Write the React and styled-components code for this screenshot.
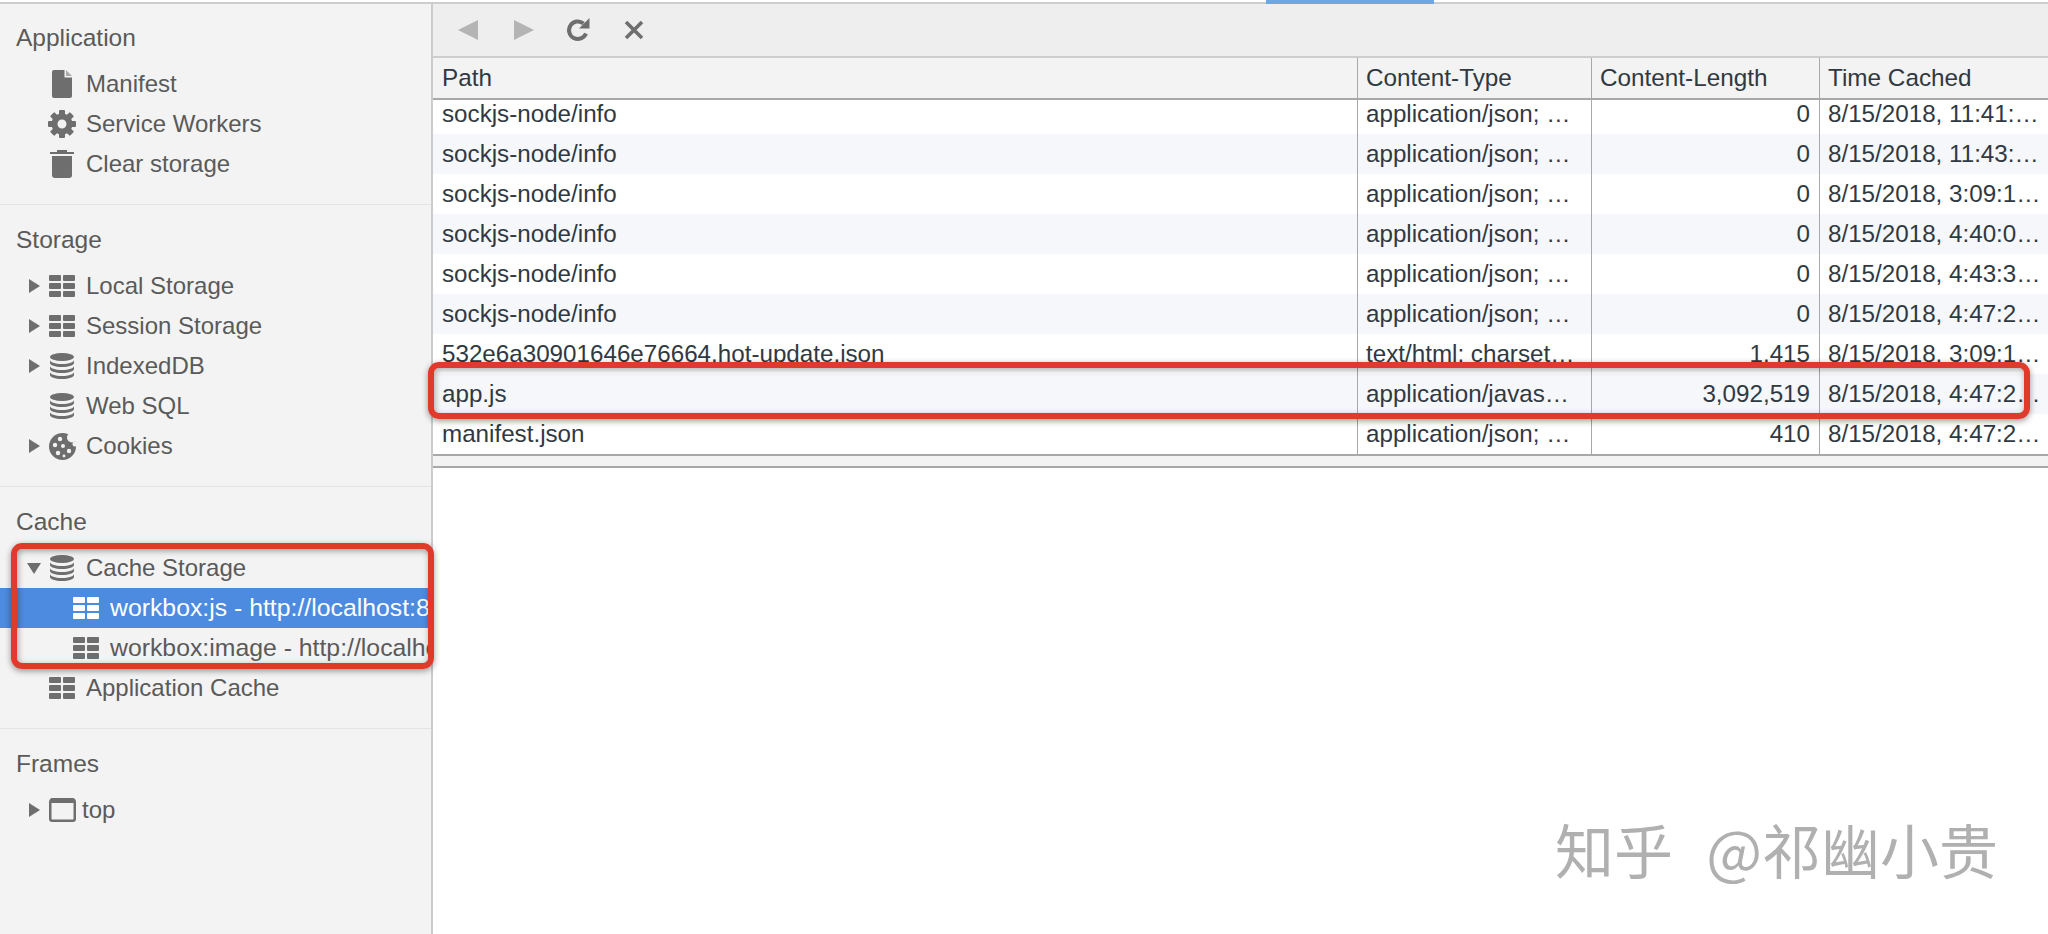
import React from 'react';
import styled, { createGlobalStyle } from 'styled-components';

const GlobalStyle = createGlobalStyle`
    html, body {
        margin: 0;
        padding: 0;
        background: #fff;
    }
    * {
        box-sizing: border-box;
    }
`;

const ICON = '#6e6e6e';

const DocIcon = () => (
    <svg width="20" height="28" viewBox="0 0 20 28">
        <path d="M2 0h10.5v7.5H20V26a2 2 0 0 1-2 2H2a2 2 0 0 1-2-2V2a2 2 0 0 1 2-2z" fill={ICON} />
        <path d="M14 0l6 6h-6z" fill={ICON} opacity=".55" />
    </svg>
);

const GearIcon = () => (
    <svg width="28" height="28" viewBox="0 0 28 28">
        <circle cx="14" cy="14" r="7.5" fill="none" stroke={ICON} strokeWidth="6" />
        {[0, 45, 90, 135, 180, 225, 270, 315].map((a) => (
            <rect key={a} x="11" y="0" width="6" height="6" rx="1" fill={ICON} transform={`rotate(${a} 14 14)`} />
        ))}
    </svg>
);

const TrashIcon = () => (
    <svg width="24" height="28" viewBox="0 0 24 28">
        <rect x="7" y="0" width="10" height="2" fill={ICON} />
        <rect x="0" y="2" width="24" height="2" fill={ICON} />
        <path d="M2 6h20v19a3 3 0 0 1-3 3H5a3 3 0 0 1-3-3z" fill={ICON} />
    </svg>
);

const TableIcon = ({ color = ICON }) => (
    <svg width="26" height="22" viewBox="0 0 26 22">
        {[0, 8, 16].map((y) => (
            <g key={y} fill={color}>
                <rect x="0" y={y} width="12" height="6" rx="1" />
                <rect x="14" y={y} width="12" height="6" rx="1" />
            </g>
        ))}
    </svg>
);

const DbIcon = () => (
    <svg width="24" height="26" viewBox="0 0 24 26">
        <ellipse cx="12" cy="4" rx="12" ry="4" fill={ICON} />
        {[7, 13, 19].map((y) => (
            <path
                key={y}
                d={`M0 ${y}c0 2.2 5 4 12 4s12-1.8 12-4v3c0 2.2-5 4-12 4s-12-1.8-12-4z`}
                fill={ICON}
            />
        ))}
    </svg>
);

const CookieIcon = () => (
    <svg width="27" height="27" viewBox="0 0 27 27">
        <circle cx="13.5" cy="13.5" r="13.5" fill={ICON} />
        <circle cx="23" cy="4.5" r="5" fill="#f3f3f3" />
        <circle cx="26" cy="11" r="2.5" fill="#f3f3f3" />
        <circle cx="11" cy="6" r="2.2" fill="#f3f3f3" />
        <circle cx="6" cy="12" r="2.2" fill="#f3f3f3" />
        <circle cx="14" cy="13" r="2" fill="#f3f3f3" />
        <circle cx="20" cy="18" r="2.2" fill="#f3f3f3" />
        <circle cx="9" cy="20" r="2.2" fill="#f3f3f3" />
        <circle cx="15" cy="23" r="1.4" fill="#f3f3f3" />
    </svg>
);

const FrameIcon = () => (
    <svg width="27" height="24" viewBox="0 0 27 24">
        <rect x="1.25" y="2" width="24.5" height="20.75" rx="2" fill="none" stroke={ICON} strokeWidth="2.5" />
        <rect x="1" y="0" width="25" height="5" rx="2" fill={ICON} />
    </svg>
);

const ICONS = {
    doc: <DocIcon />,
    gear: <GearIcon />,
    trash: <TrashIcon />,
    table: <TableIcon />,
    db: <DbIcon />,
    cookie: <CookieIcon />,
    frame: <FrameIcon />,
};

const sections = [
    {
        title: 'Application',
        items: [
            { label: 'Manifest', icon: 'doc' },
            { label: 'Service Workers', icon: 'gear' },
            { label: 'Clear storage', icon: 'trash' },
        ],
    },
    {
        title: 'Storage',
        items: [
            { label: 'Local Storage', icon: 'table', arrow: 'right' },
            { label: 'Session Storage', icon: 'table', arrow: 'right' },
            { label: 'IndexedDB', icon: 'db', arrow: 'right' },
            { label: 'Web SQL', icon: 'db' },
            { label: 'Cookies', icon: 'cookie', arrow: 'right' },
        ],
    },
    {
        title: 'Cache',
        items: [
            { label: 'Cache Storage', icon: 'db', arrow: 'down' },
            { label: 'workbox:js - http://localhost:8080', icon: 'table', child: true, selected: true },
            { label: 'workbox:image - http://localhost:8080', icon: 'table', child: true },
            { label: 'Application Cache', icon: 'table' },
        ],
    },
    {
        title: 'Frames',
        items: [{ label: 'top', icon: 'frame', arrow: 'right', tight: true }],
    },
];

const rows = [
    ['sockjs-node/info', 'application/json; …', '0', '8/15/2018, 11:41:…'],
    ['sockjs-node/info', 'application/json; …', '0', '8/15/2018, 11:43:…'],
    ['sockjs-node/info', 'application/json; …', '0', '8/15/2018, 3:09:1…'],
    ['sockjs-node/info', 'application/json; …', '0', '8/15/2018, 4:40:0…'],
    ['sockjs-node/info', 'application/json; …', '0', '8/15/2018, 4:43:3…'],
    ['sockjs-node/info', 'application/json; …', '0', '8/15/2018, 4:47:2…'],
    ['532e6a30901646e76664.hot-update.json', 'text/html; charset…', '1,415', '8/15/2018, 3:09:1…'],
    ['app.js', 'application/javas…', '3,092,519', '8/15/2018, 4:47:2…'],
    ['manifest.json', 'application/json; …', '410', '8/15/2018, 4:47:2…'],
];

function App() {
    return (
        <Page>
            <GlobalStyle />
            <TopEdge />
            <TabIndicator />
            <Columns>
                <Sidebar>
                    {sections.map((section) => (
                        <Section key={section.title}>
                            <Heading>{section.title}</Heading>
                            {section.items.map((item) => (
                                <Item key={item.label} $child={item.child} $selected={item.selected}>
                                    <ArrowSlot>{item.arrow && <Arrow $dir={item.arrow} />}</ArrowSlot>
                                    <IconSlot>
                                        {item.selected ? <TableIcon color="#fff" /> : ICONS[item.icon]}
                                    </IconSlot>
                                    <Label $tight={item.tight}>{item.label}</Label>
                                </Item>
                            ))}
                        </Section>
                    ))}
                </Sidebar>
                <Main>
                    <Toolbar>
                        <NavArrow $dir="left" />
                        <NavArrow $dir="right" />
                        <ToolButton>
                            <svg width="26" height="26" viewBox="0 0 26 26">
                                <path
                                    d="M21 16.5A8.8 8.8 0 1 1 18.5 6.5"
                                    fill="none"
                                    stroke={ICON}
                                    strokeWidth="4"
                                />
                                <path d="M14 11.5h10.5V1z" fill={ICON} />
                            </svg>
                        </ToolButton>
                        <ToolButton>
                            <svg width="20" height="20" viewBox="0 0 20 20">
                                <path d="M2 2l16 16M18 2L2 18" fill="none" stroke={ICON} strokeWidth="3.6" />
                            </svg>
                        </ToolButton>
                    </Toolbar>
                    <TableHead>
                        <Cell>Path</Cell>
                        <Cell $divided>Content-Type</Cell>
                        <Cell $divided>Content-Length</Cell>
                        <Cell $divided>Time Cached</Cell>
                    </TableHead>
                    <TableBody>
                        <RowList>
                            {rows.map((row, i) => (
                                <Row key={i} $striped={i % 2 === 1}>
                                    <Cell>{row[0]}</Cell>
                                    <Cell $divided>{row[1]}</Cell>
                                    <Cell $divided $right>{row[2]}</Cell>
                                    <Cell $divided>{row[3]}</Cell>
                                </Row>
                            ))}
                        </RowList>
                    </TableBody>
                    <TableFooter />
                </Main>
            </Columns>
            <Callout $left={428} $top={362} $width={1602} $height={57} />
            <Callout $left={11} $top={543} $width={423} $height={126} />
            <Watermark>知乎 @祁幽小贵</Watermark>
        </Page>
    );
}

const Page = styled.div`
    position: relative;
    display: flex;
    flex-direction: column;
    width: 2048px;
    height: 934px;
    overflow: hidden;
    font-family: "Liberation Sans", Arial, sans-serif;
    background: #fff;
`;

const TopEdge = styled.div`
    flex: none;
    height: 4px;
    background: #fff;
    border-top: 2px solid transparent;
    border-bottom: 2px solid #cdcdcd;
`;

const TabIndicator = styled.div`
    position: absolute;
    left: 1266px;
    top: 0;
    width: 168px;
    height: 4px;
    background: #6ea8e2;
`;

const Columns = styled.div`
    flex: 1;
    display: grid;
    grid-template-columns: 433px 1fr;
    min-height: 0;
`;

const Sidebar = styled.aside`
    background: #f3f3f3;
    border-right: 2px solid #cccccc;
    overflow: hidden;
`;

const Section = styled.section`
    padding: 15px 0 20px;
    border-bottom: 1px solid #e4e4e4;

    &:first-child {
        padding-top: 14px;
    }

    &:last-child {
        border-bottom: none;
    }
`;

const Heading = styled.h3`
    margin: 0 0 6px;
    padding-left: 16px;
    height: 40px;
    line-height: 40px;
    font-size: 24.5px;
    font-weight: 400;
    color: #5a5a5a;
`;

const Item = styled.div`
    display: flex;
    align-items: center;
    height: 40px;
    padding-left: ${(p) => (p.$child ? '48px' : '24px')};
    background: ${(p) => (p.$selected ? '#4c8be0' : 'transparent')};
    color: ${(p) => (p.$selected ? '#fff' : '#5a5a5a')};
    font-size: ${(p) => (p.$child ? '24.8px' : '24px')};
    white-space: nowrap;
    overflow: hidden;
`;

const ArrowSlot = styled.span`
    flex: none;
    display: flex;
    align-items: center;
    justify-content: center;
    width: 20px;
    margin-right: 4px;
`;

const Arrow = styled.span`
    width: 0;
    height: 0;
    border-style: solid;
    ${(p) =>
        p.$dir === 'down'
            ? `border-width: 11px 7px 0 7px; border-color: ${ICON} transparent transparent transparent;`
            : `border-width: 7px 0 7px 11px; border-color: transparent transparent transparent ${ICON};`}
`;

const IconSlot = styled.span`
    flex: none;
    display: flex;
    align-items: center;
    justify-content: center;
    width: 28px;
    height: 28px;
`;

const Label = styled.span`
    margin-left: ${(p) => (p.$tight ? '6px' : '10px')};
`;

const Main = styled.main`
    display: flex;
    flex-direction: column;
    min-width: 0;
    background: #fff;
`;

const Toolbar = styled.div`
    flex: none;
    display: flex;
    align-items: center;
    height: 54px;
    padding-left: 25px;
    background: #eeeeee;
    border-bottom: 2px solid #cdcdcd;
`;

const NavArrow = styled.span`
    width: 0;
    height: 0;
    margin-right: ${(p) => (p.$dir === 'left' ? '36px' : '31px')};
    border-style: solid;
    ${(p) =>
        p.$dir === 'left'
            ? 'border-width: 10px 20px 10px 0; border-color: transparent #b4b4b4 transparent transparent;'
            : 'border-width: 10px 0 10px 20px; border-color: transparent transparent transparent #b4b4b4;'}
`;

const ToolButton = styled.span`
    display: flex;
    align-items: center;
    justify-content: center;
    width: 26px;
    height: 26px;
    margin-right: 30px;
`;

const TableHead = styled.div`
    flex: none;
    display: grid;
    grid-template-columns: 924px 234px 228px 1fr;
    height: 42px;
    background: #f3f3f3;
    border-bottom: 2px solid #a8a8a8;
    line-height: 39px;
    font-size: 24.3px;
    color: #303942;
`;

const TableBody = styled.div`
    flex: none;
    height: 356px;
    overflow: hidden;
    border-bottom: 2px solid #a8a8a8;
`;

const RowList = styled.div`
    margin-top: -6px;
`;

const Row = styled.div`
    display: grid;
    grid-template-columns: 924px 234px 228px 1fr;
    height: 40px;
    line-height: 40px;
    font-size: 24.2px;
    color: #303942;
    background: ${(p) => (p.$striped ? '#f5f7fb' : '#fff')};
`;

const Cell = styled.div`
    padding: 0 9px 0 ${(p) => (p.$divided ? '8px' : '9px')};
    white-space: nowrap;
    overflow: hidden;
    text-align: ${(p) => (p.$right ? 'right' : 'left')};
    border-left: ${(p) => (p.$divided ? '1px solid #a8a8a8' : 'none')};
`;

const TableFooter = styled.div`
    flex: none;
    height: 12px;
    background: #f3f3f3;
    border-bottom: 2px solid #a8a8a8;
`;

const Callout = styled.div`
    position: absolute;
    left: ${(p) => p.$left}px;
    top: ${(p) => p.$top}px;
    width: ${(p) => p.$width}px;
    height: ${(p) => p.$height}px;
    border: 6px solid #e03a2c;
    border-radius: 11px;
    box-shadow: 0 2px 6px rgba(0, 0, 0, 0.4), inset 1px 2px 6px rgba(0, 0, 0, 0.35);
    pointer-events: none;
`;

const Watermark = styled.div`
    position: absolute;
    right: 50px;
    top: 804px;
    font-family: "Noto Sans CJK SC", "Liberation Sans", sans-serif;
    font-size: 59px;
    font-weight: 400;
    line-height: 90px;
    word-spacing: 20px;
    white-space: nowrap;
    color: #b0b0b0;
`;

export default App;
